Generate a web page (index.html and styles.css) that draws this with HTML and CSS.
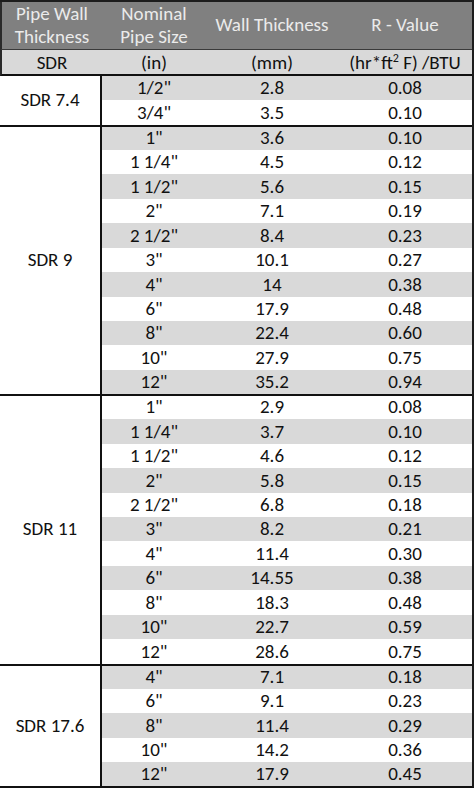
FILE: index.html
```html
<!DOCTYPE html>
<html>
<head>
<meta charset="utf-8">
<link rel="stylesheet" href="styles.css">
</head>
<body>
<table class="pipe">
  <colgroup><col class="c1"><col class="c2"><col class="c3"><col class="c4"></colgroup>
  <thead>
    <tr class="head">
      <th class="first">Pipe Wall<br>Thickness</th>
      <th>Nominal<br>Pipe Size</th>
      <th>Wall Thickness</th>
      <th>R - Value</th>
    </tr>
    <tr class="sub">
      <th class="first">SDR</th>
      <th>(in)</th>
      <th>(mm)</th>
      <th>(hr*ft<sup>2</sup> F) /BTU</th>
    </tr>
  </thead>
  <tbody>
    <tr class="g s"><td class="grp" rowspan="2">SDR 7.4</td><td>1/2"</td><td>2.8</td><td>0.08</td></tr>
    <tr><td>3/4"</td><td>3.5</td><td>0.10</td></tr>

    <tr class="g s"><td class="grp" rowspan="11">SDR 9</td><td>1"</td><td>3.6</td><td>0.10</td></tr>
    <tr><td>1 1/4"</td><td>4.5</td><td>0.12</td></tr>
    <tr class="s"><td>1 1/2"</td><td>5.6</td><td>0.15</td></tr>
    <tr><td>2"</td><td>7.1</td><td>0.19</td></tr>
    <tr class="s"><td>2 1/2"</td><td>8.4</td><td>0.23</td></tr>
    <tr><td>3"</td><td>10.1</td><td>0.27</td></tr>
    <tr class="s"><td>4"</td><td>14</td><td>0.38</td></tr>
    <tr><td>6"</td><td>17.9</td><td>0.48</td></tr>
    <tr class="s"><td>8"</td><td>22.4</td><td>0.60</td></tr>
    <tr><td>10"</td><td>27.9</td><td>0.75</td></tr>
    <tr class="s"><td>12"</td><td>35.2</td><td>0.94</td></tr>

    <tr class="g"><td class="grp" rowspan="11">SDR 11</td><td>1"</td><td>2.9</td><td>0.08</td></tr>
    <tr class="s"><td>1 1/4"</td><td>3.7</td><td>0.10</td></tr>
    <tr><td>1 1/2"</td><td>4.6</td><td>0.12</td></tr>
    <tr class="s"><td>2"</td><td>5.8</td><td>0.15</td></tr>
    <tr><td>2 1/2"</td><td>6.8</td><td>0.18</td></tr>
    <tr class="s"><td>3"</td><td>8.2</td><td>0.21</td></tr>
    <tr><td>4"</td><td>11.4</td><td>0.30</td></tr>
    <tr class="s"><td>6"</td><td>14.55</td><td>0.38</td></tr>
    <tr><td>8"</td><td>18.3</td><td>0.48</td></tr>
    <tr class="s"><td>10"</td><td>22.7</td><td>0.59</td></tr>
    <tr><td>12"</td><td>28.6</td><td>0.75</td></tr>

    <tr class="g s"><td class="grp" rowspan="5">SDR 17.6</td><td>4"</td><td>7.1</td><td>0.18</td></tr>
    <tr><td>6"</td><td>9.1</td><td>0.23</td></tr>
    <tr class="s"><td>8"</td><td>11.4</td><td>0.29</td></tr>
    <tr><td>10"</td><td>14.2</td><td>0.36</td></tr>
    <tr class="s"><td>12"</td><td>17.9</td><td>0.45</td></tr>
  </tbody>
</table>
</body>
</html>
```

FILE: styles.css
```css
html, body {
  margin: 0;
  padding: 0;
  background: #ffffff;
}

.pipe {
  width: 474px;
  table-layout: fixed;
  border-collapse: separate;
  border-spacing: 0;
  font-family: Carlito, "Open Sans", sans-serif;
  font-size: 19px;
  color: #111;
  border-top: 2px solid #1c1c1c;
  border-right: 2px solid #1c1c1c;
  border-bottom: 2px solid #111;
}

.c1 { width: 102px; }
.c2 { width: 104px; }
.c3 { width: 132px; }
.c4 { width: 134px; }

.pipe th,
.pipe td {
  padding: 0;
  text-align: center;
  font-weight: normal;
  white-space: nowrap;
}

.head th {
  background: #808080;
  color: #ebebeb;
  height: 47px;
  line-height: 22.5px;
  vertical-align: middle;
  border-bottom: 1px solid #3a3a3a;
}

.sub th {
  background: #d9d9d9;
  color: #111;
  height: 24px;
  line-height: 22px;
  vertical-align: bottom;
  border-bottom: 2px solid #111;
}

.pipe th.first {
  border-left: 2px solid #2a2a2a;
}

.pipe sup {
  font-size: 12px;
  line-height: 0;
  vertical-align: 7px;
}

.pipe tbody tr {
  height: 24.45px;
}

.pipe tbody td {
  line-height: 22px;
  vertical-align: bottom;
  padding-bottom: 1px;
}

.pipe tbody tr.s td {
  background: #d9d9d9;
}

.pipe tbody tr.g td {
  border-top: 2px solid #111;
}

.pipe tbody tr:first-child td {
  border-top: none;
}

.pipe td.grp,
.pipe tbody tr.s td.grp {
  background: #ffffff;
  vertical-align: middle;
  border-right: 2px solid #111;
}
```
